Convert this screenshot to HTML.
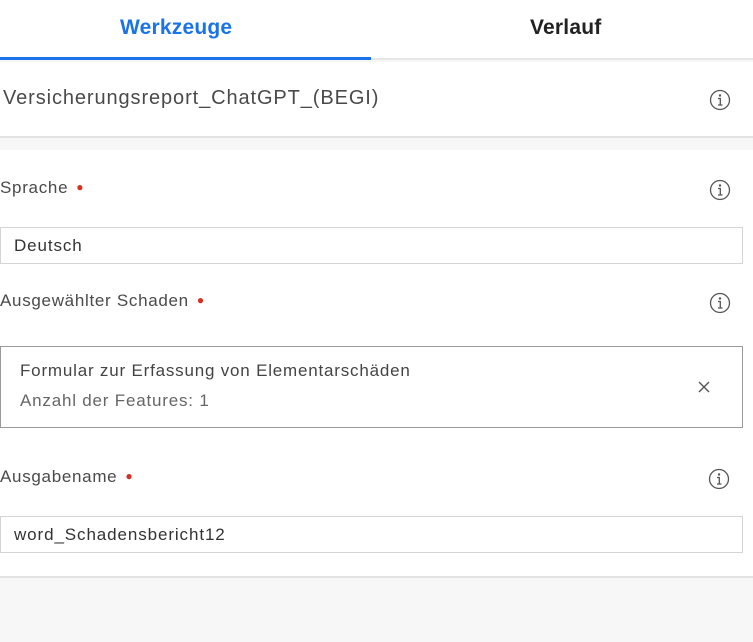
<!DOCTYPE html>
<html><head><meta charset="utf-8"><style>
*{box-sizing:border-box;margin:0;padding:0}
body{width:753px;height:642px;background:#f7f7f7;font-family:"Liberation Sans",sans-serif;color:#4a4a4a;position:relative;overflow:hidden}
.a{position:absolute}
.tabs{left:0;top:0;width:753px;height:60px;background:#fff;border-bottom:2px solid #e6e6e6}
.tab{top:16px;font-size:21px;font-weight:bold;letter-spacing:0.2px}
.lbl{font-size:17px;color:#4a4a4a;left:0;letter-spacing:0.7px}
.dot{color:#d83020;font-size:12px;margin-left:8px;position:relative;top:-2px}
.inp{left:0;width:743px;height:37px;border:1px solid #d4d4d4;background:#fff;font-size:17px;padding:8px 13px;color:#333;letter-spacing:0.9px}
.info{width:22px;height:22px}
</style></head><body>
<div class="a tabs"></div>
<div class="a" style="left:0;top:57px;width:371px;height:3px;background:#1a73e8"></div>
<div class="a tab" style="left:120px;color:#1a73e8">Werkzeuge</div>
<div class="a tab" style="left:530px;color:#222">Verlauf</div>
<div class="a" style="left:0;top:62px;width:753px;height:76px;background:#fff;border-bottom:2px solid #e3e3e3"></div>
<div class="a" style="left:3px;top:87px;font-size:20px;color:#4a4a4a;letter-spacing:0.9px">Versicherungsreport_ChatGPT_(BEGI)</div>
<div class="a" style="left:0;top:150px;width:753px;height:428px;background:#fff;border-bottom:2px solid #e3e3e3"></div>
<div class="a lbl" style="top:178px">Sprache<span class="dot">●</span></div>
<div class="a inp" style="top:227px">Deutsch</div>
<div class="a lbl" style="top:291px">Ausgewählter Schaden<span class="dot">●</span></div>
<div class="a" style="left:0;top:346px;width:743px;height:82px;border:1.5px solid #9a9a9a;background:#fff"></div>
<div class="a" style="left:20px;top:361px;font-size:17px;color:#444;letter-spacing:0.8px">Formular zur Erfassung von Elementarschäden</div>
<div class="a" style="left:20px;top:391px;font-size:17px;color:#666;letter-spacing:0.8px">Anzahl der Features: 1</div>
<svg class="a" style="left:697px;top:380px" width="14" height="14" viewBox="0 0 14 14"><path d="M2 2L12 12M12 2L2 12" stroke="#555" stroke-width="1.4"/></svg>
<div class="a lbl" style="top:467px">Ausgabename<span class="dot">●</span></div>
<div class="a inp" style="top:516px">word_Schadensbericht12</div>
<svg class="a info" style="left:709px;top:89px" viewBox="0 0 22 22"><circle cx="11" cy="11" r="9.5" fill="none" stroke="#555" stroke-width="1.3"/><circle cx="11" cy="6.5" r="1.2" fill="#555"/><path d="M9 9.5h2.3v6.5M9 16h4.5" fill="none" stroke="#555" stroke-width="1.3"/></svg>
<svg class="a info" style="left:709px;top:179px" viewBox="0 0 22 22"><circle cx="11" cy="11" r="9.5" fill="none" stroke="#555" stroke-width="1.3"/><circle cx="11" cy="6.5" r="1.2" fill="#555"/><path d="M9 9.5h2.3v6.5M9 16h4.5" fill="none" stroke="#555" stroke-width="1.3"/></svg>
<svg class="a info" style="left:709px;top:292px" viewBox="0 0 22 22"><circle cx="11" cy="11" r="9.5" fill="none" stroke="#555" stroke-width="1.3"/><circle cx="11" cy="6.5" r="1.2" fill="#555"/><path d="M9 9.5h2.3v6.5M9 16h4.5" fill="none" stroke="#555" stroke-width="1.3"/></svg>
<svg class="a info" style="left:708px;top:468px" viewBox="0 0 22 22"><circle cx="11" cy="11" r="9.5" fill="none" stroke="#555" stroke-width="1.3"/><circle cx="11" cy="6.5" r="1.2" fill="#555"/><path d="M9 9.5h2.3v6.5M9 16h4.5" fill="none" stroke="#555" stroke-width="1.3"/></svg>
</body></html>
